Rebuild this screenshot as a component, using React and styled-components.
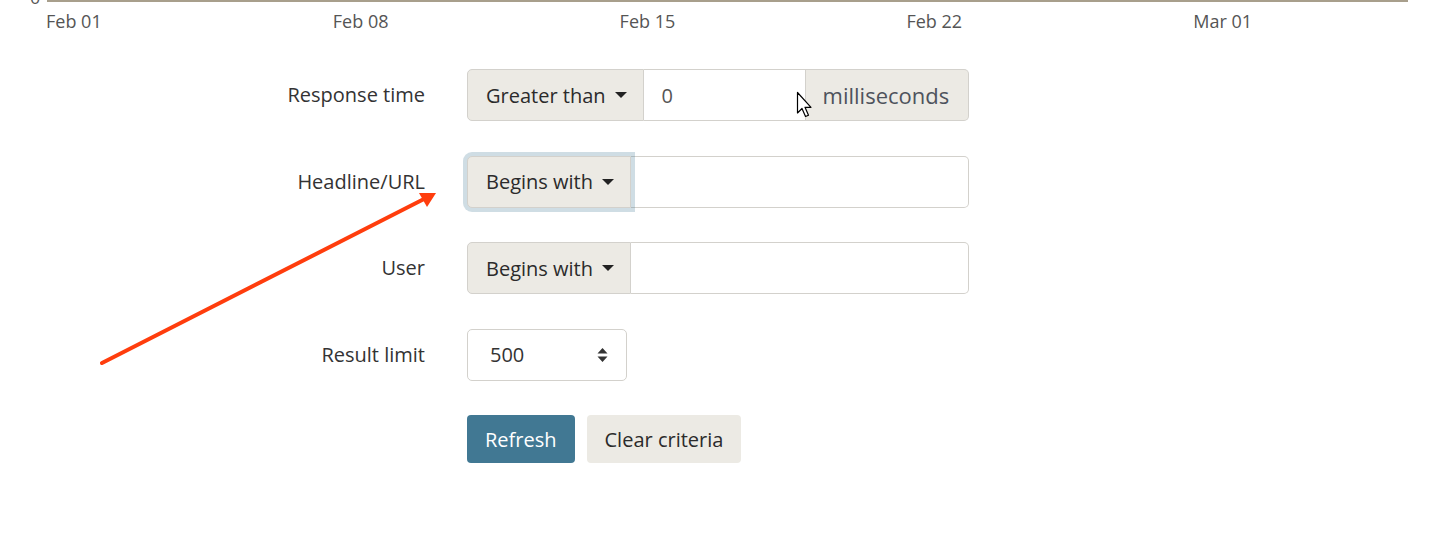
import React from 'react';
import styled, { createGlobalStyle } from 'styled-components';

const GlobalStyle = createGlobalStyle`
  html, body {
    margin: 0;
    padding: 0;
    background: #fff;
    font-family: "Open Sans", "Liberation Sans", sans-serif;
    color: #333;
  }
  * { box-sizing: border-box; }
`;

const Page = styled.div`
  position: relative;
  width: 1435px;
  height: 536px;
  overflow: hidden;
`;

const Chart = styled.div`
  position: relative;
  padding-left: 46px;
`;

const AxisLine = styled.div`
  margin-left: 1px;
  width: 1361px;
  height: 2px;
  background: #a89f8c;
`;

const ZeroTick = styled.span`
  position: absolute;
  left: 30px;
  top: -12px;
  font-size: 18px;
  line-height: 18px;
  color: #555;
`;

const TickRow = styled.div`
  display: flex;
  padding-top: 7px;
`;

const Tick = styled.span`
  flex: 0 0 286.8px;
  font-size: 18px;
  line-height: 24px;
  color: #555;
`;

const Form = styled.div`
  display: grid;
  grid-template-columns: 425px 502px;
  column-gap: 42px;
  row-gap: 34.5px;
  align-items: center;
  margin-top: 36px;
`;

const Label = styled.label`
  text-align: right;
  font-size: 20px;
  line-height: 26px;
  color: #333;
`;

const Group = styled.div`
  display: flex;
  height: 52px;
  width: 502px;
`;

const Dropdown = styled.button`
  position: relative;
  display: flex;
  align-items: center;
  gap: 9px;
  height: 100%;
  padding: 0 16px 0 18px;
  border: 1px solid #d3d1cc;
  border-radius: 5px 0 0 5px;
  background: #eceae4;
  color: #2b2b2b;
  font-family: inherit;
  font-size: 20px;
  z-index: ${({ $focus }) => ($focus ? 2 : 0)};
  box-shadow: ${({ $focus }) => ($focus ? '0 0 0 4px rgba(65,120,147,0.25)' : 'none')};
  &::after {
    content: '';
    border-top: 6px solid #222;
    border-left: 6px solid transparent;
    border-right: 6px solid transparent;
  }
`;

const TextInput = styled.input`
  flex: ${({ $fixed }) => ($fixed ? `0 0 ${$fixed}` : '1')};
  min-width: 0;
  height: 100%;
  padding: 0 18px;
  border: 1px solid #d3d1cc;
  border-left: none;
  border-radius: ${({ $end }) => ($end ? '0 5px 5px 0' : '0')};
  font-family: inherit;
  font-size: 20px;
  color: #555;
  outline: none;
`;

const Addon = styled.span`
  display: flex;
  align-items: center;
  flex: 1;
  padding-left: 17px;
  border: 1px solid #d3d1cc;
  border-left: none;
  border-radius: 0 5px 5px 0;
  background: #eceae4;
  font-size: 22px;
  color: #4e535c;
`;

const Select = styled.div`
  display: flex;
  align-items: center;
  justify-content: space-between;
  width: 160px;
  height: 52px;
  padding: 0 18px 0 22px;
  border: 1px solid #d3d1cc;
  border-radius: 5px;
  font-size: 20px;
  color: #333;
`;

const Actions = styled.div`
  display: flex;
  gap: 12px;
`;

const Button = styled.button`
  height: 48px;
  padding: 0 18px;
  border: none;
  border-radius: 4px;
  background: ${({ $primary }) => ($primary ? '#417893' : '#eceae4')};
  color: ${({ $primary }) => ($primary ? '#fff' : '#2b2b2b')};
  font-family: inherit;
  font-size: 20px;
`;

const Overlay = styled.svg`
  position: absolute;
  left: 0;
  top: 0;
  pointer-events: none;
`;

const ticks = ['Feb 01', 'Feb 08', 'Feb 15', 'Feb 22', 'Mar 01'];

export default function App() {
  return (
    <Page>
      <GlobalStyle />
      <Chart>
        <ZeroTick>0</ZeroTick>
        <AxisLine />
        <TickRow>
          {ticks.map((t) => (
            <Tick key={t}>{t}</Tick>
          ))}
        </TickRow>
      </Chart>

      <Form>
        <Label>Response time</Label>
        <Group>
          <Dropdown>Greater than</Dropdown>
          <TextInput $fixed="162px" defaultValue="0" />
          <Addon>milliseconds</Addon>
        </Group>

        <Label>Headline/URL</Label>
        <Group>
          <Dropdown $focus>Begins with</Dropdown>
          <TextInput $end />
        </Group>

        <Label>User</Label>
        <Group>
          <Dropdown>Begins with</Dropdown>
          <TextInput $end />
        </Group>

        <Label>Result limit</Label>
        <Select>
          <span>500</span>
          <svg width="11" height="16" viewBox="0 0 11 16">
            <path d="M5.5 1 L10.5 6.5 H0.5 Z M5.5 15 L10.5 9.5 H0.5 Z" fill="#333" />
          </svg>
        </Select>

        <span />
        <Actions>
          <Button $primary>Refresh</Button>
          <Button>Clear criteria</Button>
        </Actions>
      </Form>

      <Overlay width="1435" height="536">
        <line x1="102" y1="363" x2="424" y2="199" stroke="#ff3d0d" strokeWidth="4" strokeLinecap="round" />
        <path d="M436 193 L419 193 L427 207 Z" fill="#ff3d0d" />
        <path
          d="M797.5 92.5 L797.5 113 L802 108.5 L805.5 116.5 L808.5 115.2 L805 107.3 L811 107.3 Z"
          fill="#fff"
          stroke="#000"
          strokeWidth="1.2"
          strokeLinejoin="round"
        />
      </Overlay>
    </Page>
  );
}
